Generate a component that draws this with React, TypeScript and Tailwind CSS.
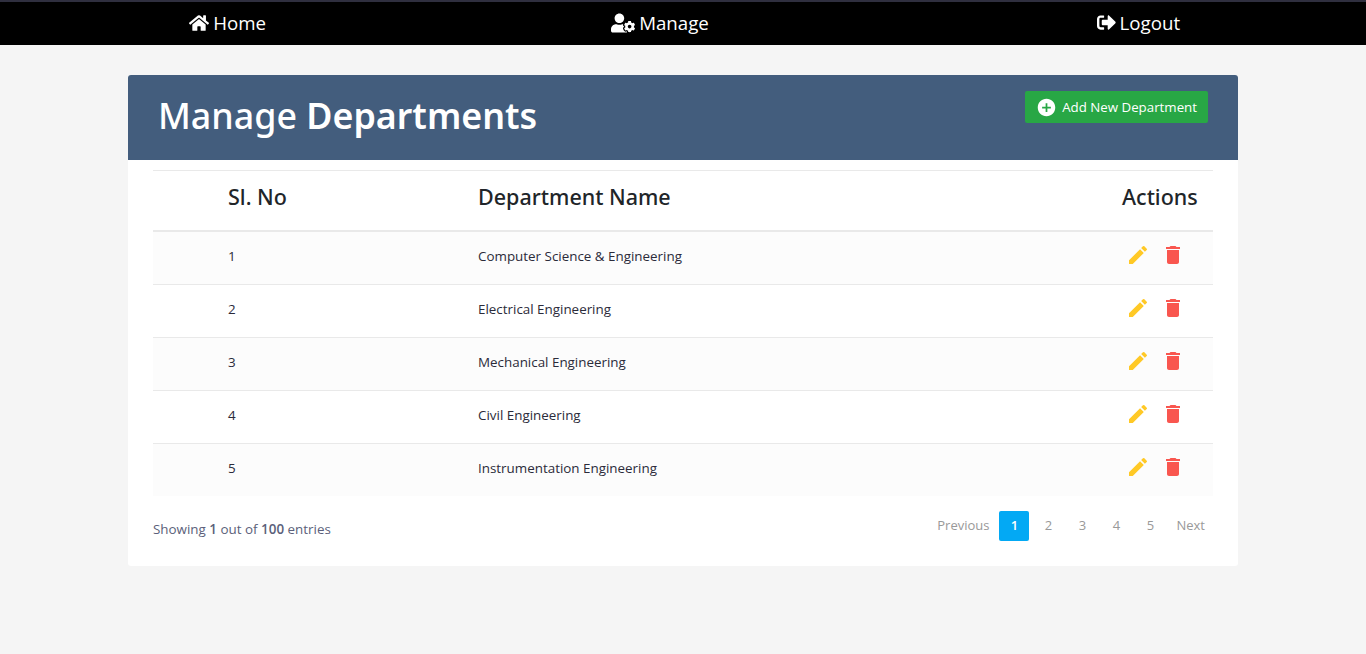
import React from "react";
import { FaHome, FaUserCog, FaSignOutAlt } from "react-icons/fa";
import { MdAddCircle, MdDelete, MdEdit } from "react-icons/md";

const DEPARTMENTS = [
  "Computer Science & Engineering",
  "Electrical Engineering",
  "Mechanical Engineering",
  "Civil Engineering",
  "Instrumentation Engineering",
];

const PAGES = [1, 2, 3, 4, 5];

const NavLink = ({ icon, label }: { icon: React.ReactNode; label: string }) => (
  <a href="#" className="-mt-[1px] flex items-center gap-[4px] text-[18.7px] font-medium text-white font-['Open_Sans',sans-serif]">
    {icon}
    <span>{label}</span>
  </a>
);

export default function App() {
  return (
    <div className="min-h-[654px] bg-[#f5f5f5] font-['Open_Sans',sans-serif]">
      {/* NAV */}
      <nav className="grid h-[45px] grid-cols-3 items-center border-t-2 border-[#2f2f3f] bg-black">
        <div className="flex justify-center">
          <NavLink icon={<FaHome size={20} />} label="Home" />
        </div>
        <div className="flex justify-center pr-[46px]">
          <NavLink icon={<FaUserCog size={24} />} label="Manage" />
        </div>
        <div className="flex justify-center">
          <NavLink icon={<FaSignOutAlt size={19} />} label="Logout" />
        </div>
      </nav>

      {/* CARD */}
      <main className="mx-[128px] mt-[30px] rounded-[3px] bg-white">
        <div className="flex h-[85px] items-start justify-between rounded-t-[3px] bg-[#435d7d] pl-[30px] pr-[30px]">
          <h2 className="mt-4 text-[35.8px] font-medium leading-[48px] text-white font-['Noto_Sans',sans-serif]">
            Manage <b className="font-semibold">Departments</b>
          </h2>
          <button className="mt-4 flex h-8 items-center gap-[5px] rounded-[2px] bg-[#28a745] pl-[11px] pr-[11px] text-[13.3px] font-medium text-white">
            <MdAddCircle size={21} />
            <span className="mt-[1px]">Add New Department</span>
          </button>
        </div>

        <div className="px-[25px] pt-[10px]">
          <table className="w-full table-fixed border-collapse text-left">
            <colgroup>
              <col className="w-[63px]" />
              <col className="w-[250px]" />
              <col />
              <col className="w-[103px]" />
            </colgroup>
            <thead>
              <tr className="h-[60px] border-t border-b-2 border-t-[#e9e9e9] border-b-[#e9e9e9] text-[21.5px] text-[#212529] font-['Noto_Sans',sans-serif]">
                <th></th>
                <th className="px-3 pb-[6px] font-medium">Sl. No</th>
                <th className="px-3 pb-[6px] font-medium">Department Name</th>
                <th className="px-3 pb-[6px] font-medium">Actions</th>
              </tr>
            </thead>
            <tbody>
              {DEPARTMENTS.map((name, i) => (
                <tr
                  key={name}
                  className={`text-[13.4px] text-[#2b2b3a] ${i === 0 ? "h-[54px]" : i < 4 ? "h-[53px]" : "h-[52px]"} ${i < 4 ? "border-b border-[#e9e9e9]" : ""} ${i % 2 === 0 ? "bg-[#fcfcfc]" : ""}`}
                >
                  <td></td>
                  <td className="px-3 pb-[3px]">{i + 1}</td>
                  <td className="px-3 pb-[3px]">{name}</td>
                  <td className="px-3">
                    <div className="-mt-[6px] flex items-center pl-[4px]">
                      <MdEdit size={24} className="text-[#ffc926]" />
                      <MdDelete size={24} className="ml-[11px] text-[#f9564f]" />
                    </div>
                  </td>
                </tr>
              ))}
            </tbody>
          </table>

          {/* FOOTER */}
          <div className="flex items-start justify-between pb-[25px] pt-[15px]">
            <div className="mt-[10px] text-[13.4px] leading-4 text-[#5b5f7a]">
              Showing <b className="font-semibold">1</b> out of <b className="font-semibold">100</b> entries
            </div>
            <div className="flex items-center pr-[8px] text-[13px] text-[#999]">
              <a href="#" className="mr-[10px]">Previous</a>
              <a href="#" className="mr-[2px] flex h-[30px] w-[30px] items-center justify-center rounded-[2px] bg-[#03a9f4] font-semibold text-white">1</a>
              {PAGES.slice(1).map((p) => (
                <a key={p} href="#" className="flex h-[30px] w-[34px] items-center justify-center">
                  {p}
                </a>
              ))}
              <a href="#" className="ml-[9px]">Next</a>
            </div>
          </div>
        </div>
      </main>
    </div>
  );
}
